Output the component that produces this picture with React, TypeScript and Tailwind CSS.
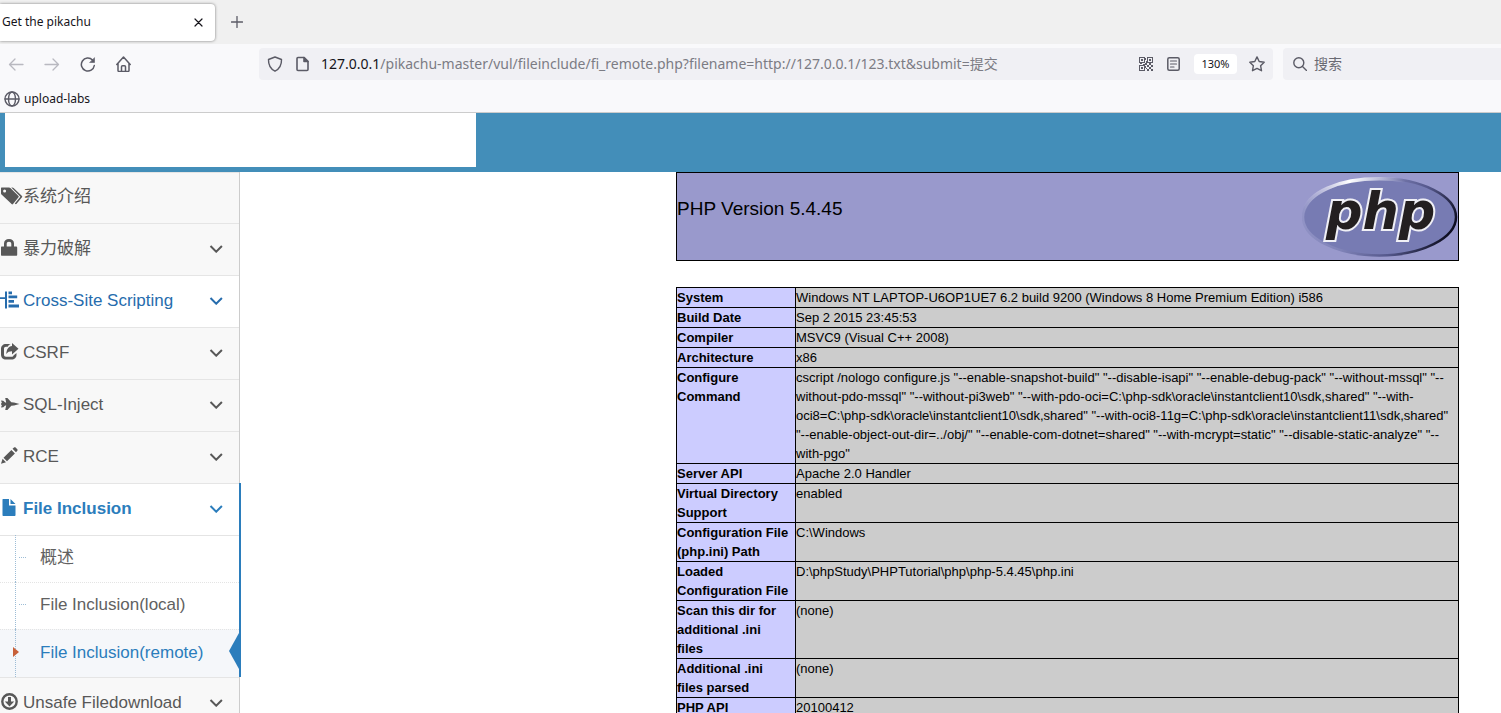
import React from "react";

const rows: [string, string][] = [
  ["System", "Windows NT LAPTOP-U6OP1UE7 6.2 build 9200 (Windows 8 Home Premium Edition) i586"],
  ["Build Date", "Sep 2 2015 23:45:53"],
  ["Compiler", "MSVC9 (Visual C++ 2008)"],
  ["Architecture", "x86"],
  [
    "Configure\nCommand",
    'cscript /nologo configure.js "--enable-snapshot-build" "--disable-isapi" "--enable-debug-pack" "--without-mssql" "--without-pdo-mssql" "--without-pi3web" "--with-pdo-oci=C:\\php-sdk\\oracle\\instantclient10\\sdk,shared" "--with-oci8=C:\\php-sdk\\oracle\\instantclient10\\sdk,shared" "--with-oci8-11g=C:\\php-sdk\\oracle\\instantclient11\\sdk,shared" "--enable-object-out-dir=../obj/" "--enable-com-dotnet=shared" "--with-mcrypt=static" "--disable-static-analyze" "--with-pgo"',
  ],
  ["Server API", "Apache 2.0 Handler"],
  ["Virtual Directory\nSupport", "enabled"],
  ["Configuration File\n(php.ini) Path", "C:\\Windows"],
  ["Loaded\nConfiguration File", "D:\\phpStudy\\PHPTutorial\\php\\php-5.4.45\\php.ini"],
  ["Scan this dir for\nadditional .ini\nfiles", "(none)"],
  ["Additional .ini\nfiles parsed", "(none)"],
  ["PHP API", "20100412"],
];

const stroke = {
  fill: "none",
  stroke: "currentColor",
  strokeLinecap: "round" as const,
  strokeLinejoin: "round" as const,
};

function Chevron() {
  return (
    <svg width="14" height="8" viewBox="0 0 14 8" className="ml-auto shrink-0">
      <path d="M1.500 1l5.700 5.700L12.900 1" fill="none" stroke="currentColor" strokeWidth="2" />
    </svg>
  );
}

function GlyphBox({ children }: { children: React.ReactNode }) {
  return (
    <svg width="23" height="20" viewBox="0 0 23 20" fill="currentColor" className="mb-0.5 shrink-0">
      {children}
    </svg>
  );
}

const glyphs = {
  tags: (
    <>
      <path fillRule="evenodd" d="M1.500 1.500h7.500c.6 0 1 .2 1.400.6L18.500 10c.4.4.4.9 0 1.300L13 18c-.4.500-1 .500-1.400 0L1.800 8.800C1.300 8.400 1 8 1 7.400V2c0-.3.200-.5.5-.5zM4.600 3.400a1.500 1.500 0 100 3 1.500 1.500 0 000-3z" />
      <path d="M11.300 1.500h.9c.6 0 1 .2 1.400.6L22 10c.4.4.4.900 0 1.300l-5.400 6.500c-.4.400-.8.400-1.200.2l-.6-.5 5.600-6.800z" />
    </>
  ),
  lock: <path fillRule="evenodd" d="M1.500 8.500H4V5.500C4 2.500 6 1 9 1s5 1.500 5 4.500v3h2.300c.5 0 .9.400.9.900v7.400c0 .6-.400 1-.9 1H2c-.600 0-1-.4-1-1V9.500c0-.6.2-1 .5-1zm5.200 0h4.600V6c0-1.500-.8-2.200-2.300-2.200S6.700 4.500 6.700 6z" />,
  align: <path d="M0 7.200h5V1.500h2v17H5V9H0zM8.500 1.500H12v2.800H8.500zM8.500 5.500h8.700v2.800H8.500zM8.500 10H14v2.800H8.500zM8.500 14.500H19v3H8.500z" />,
  share: (
    <>
      <path d="M10.500 2H6C3 2 1 4 1 7v5.500C1 15.500 3 17.500 6 17.500h5.500c3 0 5-2 5-4.500v-2l-3 2.500c-.2.900-.9 1.300-2 1.300H6c-1.300 0-2-.700-2-2V6.700c0-1.300.7-2 2-2h1.700C8.400 3.500 9.300 2.600 10.500 2z" />
      <path d="M12 1l6.500 5.700L12 12.400V9.300c-2.600 0-4.300.6-5.700 2.700C6.500 7.500 8.500 4.300 12 4z" />
    </>
  ),
  plane: <path d="M1 6.500l2.300.3 1.900 1.600h1L5.200 4h2.200l3.900 4.200 2.700.300 5.500 1.500-5.500 1.500-2.700.3L7.400 16H5.200l1-4.400h-1l-1.900 1.600-2.300.3.900-2.500-.9-.4v-1.200l.9-.4z" />,
  pencil: <path d="M1 17.800l1.600-5 3.400 3.400zM3.500 11.800l7.900-7.900 3.500 3.500L7 15.300zM12.500 2.800l1.500-1.300c.6-.5 1.100-.5 1.600 0L17.300 3.200c.5.5.5 1.100 0 1.600L16 6.300z" />,
  file: <path d="M3 1h6v6.500h6.500V17c0 .6-.4 1-1 1H3.500c-.6 0-1-.4-1-1V1.500c0-.3.200-.5.5-.5zM10.500 1l5 5h-5z" />,
  download: (
    <>
      <circle cx="9.500" cy="9.500" r="7.200" fill="none" stroke="currentColor" strokeWidth="2.400" />
      <path d="M8 5h3v4.500h3.200l-4.700 5-4.700-5H8z" />
    </>
  ),
};

type Item = { label: string; icon: keyof typeof glyphs; tone?: string; size?: string; chevron?: boolean };

const itemsTop: Item[] = [
  { label: "系统介绍", icon: "tags", size: "h-[51px]", chevron: false },
  { label: "暴力破解", icon: "lock" },
  { label: "Cross-Site Scripting", icon: "align", tone: "bg-white text-[#266cad]" },
  { label: "CSRF", icon: "share" },
  { label: "SQL-Inject", icon: "plane" },
  { label: "RCE", icon: "pencil" },
];

function NavItem({
  label,
  icon,
  tone = "bg-[#f8f8f8] text-[#585858]",
  size = "h-13",
  chevron = true,
}: Item) {
  return (
    <li>
      <a
        href="#"
        className={`flex items-center border-t border-[#e5e5e5] pr-4 pb-0.5 text-[17px] ${size} ${tone}`}
      >
        <GlyphBox>{glyphs[icon]}</GlyphBox>
        <span className="whitespace-nowrap">{label}</span>
        {chevron && <Chevron />}
      </a>
    </li>
  );
}

function SubItem({ label, active = false }: { label: string; active?: boolean }) {
  return (
    <li className="group relative">
      <a
        href="#"
        className={
          active
            ? "flex h-12 items-center border-t border-dotted border-[#e4e4e4] bg-[#f5f7fa] pb-0.5 pl-10 text-[17px] text-[#2b7dbc]"
            : "flex h-[47px] items-center border-t border-dotted border-[#e4e4e4] pb-0.5 pl-10 text-[17px] text-[#616161] group-first:border-solid"
        }
      >
        {label}
      </a>
      <span className="absolute top-0 bottom-0 left-[15px] border-l border-dotted border-[#9dbdd6]" />
      {active ? (
        <>
          <svg width="6" height="10" viewBox="0 0 6 10" className="absolute top-[18px] left-[13px]">
            <path d="M0 0l6 5-6 5z" fill="#c86139" />
          </svg>
          <svg width="10" height="36" viewBox="0 0 10 36" className="absolute top-1 right-0">
            <path d="M10 0v36L0 18z" fill="#2b7dbc" />
          </svg>
        </>
      ) : (
        <span className="absolute top-[22px] left-[19px] w-[7px] border-t border-dotted border-[#9dbdd6]" />
      )}
    </li>
  );
}

function PhpLogo() {
  return (
    <svg width="156" height="82" viewBox="0 0 156 82" role="img" aria-label="PHP logo" className="shrink-0">
      <defs>
        <linearGradient id="rim" x1="0" y1="0.3" x2="1" y2="0.6">
          <stop offset="0" stopColor="#9496c8" />
          <stop offset="0.4" stopColor="#8083b8" />
          <stop offset="0.7" stopColor="#55588c" />
          <stop offset="1" stopColor="#0c0c1e" />
        </linearGradient>
        <linearGradient id="shine" x1="0" y1="0" x2="1" y2="0">
          <stop offset="0" stopColor="#fff" stopOpacity="0" />
          <stop offset="0.45" stopColor="#fff" />
          <stop offset="1" stopColor="#fff" stopOpacity="0" />
        </linearGradient>
      </defs>
      <ellipse cx="77.500" cy="41" rx="76.500" ry="38.500" fill="#777bb3" stroke="url(#rim)" strokeWidth="2.500" />
      <path
        d="M1.500 37C5 16 37 2.800 77.500 2.800c10 0 18 .8 26 2.300"
        fill="none"
        stroke="url(#shine)"
        strokeWidth="3.500"
      />
      <text
        x="24"
        y="53"
        fontFamily="DejaVu Sans"
        fontWeight="bold"
        fontStyle="italic"
        fontSize="51"
        fill="#231f20"
        stroke="#f0f0f6"
        strokeWidth="4"
        paintOrder="stroke"
      >
        php
      </text>
    </svg>
  );
}

function QrIcon() {
  return (
    <svg width="14" height="14" viewBox="0 0 14 14" fill="currentColor" shapeRendering="crispEdges">
      <path
        fillRule="evenodd"
        d="M0 0h6v6H0zM1 1v4h4V1zM8 0h6v6H8zM9 1v4h4V1zM0 8h6v6H0zM1 9v4h4V9z"
      />
      <path d="M2 2h2v2H2zM10 2h2v2h-2zM2 10h2v2H2zM6 1h1v2H6zM7 4h1v2H7zM6 6h2v2H6zM1 6h2v1H1zM4 7h2v1H4zM8 8h2v2H8zM10 6h2v2h-2zM12 8h2v2h-2zM10 10h2v2h-2zM8 12h2v2H8zM12 12h2v2h-2zM6 9h1v2H6zM7 11h1v1H7z" />
    </svg>
  );
}

export default function App() {
  return (
    <div className="flex h-screen flex-col overflow-hidden bg-white font-['Liberation_Sans','Noto_Sans_CJK_SC',sans-serif]">
      <header className="shrink-0 border-b border-[#ccc] bg-[#f9f9fb] font-['Noto_Sans','Noto_Sans_CJK_SC',sans-serif] text-[#15141a]">
        <div className="flex h-11 items-center bg-[#f0f0f0]">
          <div className="flex h-[37px] w-[215px] items-center justify-between rounded-r bg-white pr-3 pl-0.5 text-xs shadow-[0_0_3px_rgba(0,0,0,0.5)]">
            <span>Get the pikachu</span>
            <button aria-label="Close tab">
              <svg width="9" height="9" viewBox="0 0 9 9" {...stroke} strokeWidth="1.200">
                <path d="M1 1l7 7M8 1L1 8" />
              </svg>
            </button>
          </div>
          <button aria-label="New tab" className="ml-4 text-[#5b5b66]">
            <svg width="12" height="12" viewBox="0 0 12 12" {...stroke} strokeWidth="1.300">
              <path d="M6 .5v11M.5 6h11" />
            </svg>
          </button>
        </div>

        <div className="flex h-10 items-center pl-2 text-[#5b5b66]">
          <div className="flex w-[251px] shrink-0 items-center gap-5">
            <button aria-label="Back" className="text-[#b9b9c0]">
              <svg width="16" height="16" viewBox="0 0 16 16" {...stroke} strokeWidth="1.300">
                <path d="M15 8.500H1.500M7 3L1.500 8.500 7 14" />
              </svg>
            </button>
            <button aria-label="Forward" className="text-[#b9b9c0]">
              <svg width="16" height="16" viewBox="0 0 16 16" {...stroke} strokeWidth="1.300">
                <path d="M1 8.500h13.500M9 3l5.500 5.500L9 14" />
              </svg>
            </button>
            <button aria-label="Reload">
              <svg width="16" height="16" viewBox="0 0 16 16" {...stroke} strokeWidth="1.500">
                <path d="M14.300 9.500A6.500 6.500 0 1 1 12.500 4" />
                <path d="M14.500 2v4.500H10z" fill="currentColor" strokeWidth=".6" />
              </svg>
            </button>
            <button aria-label="Home">
              <svg width="16" height="16" viewBox="0 0 16 16" {...stroke} strokeWidth="1.500">
                <path d="M.8 8.500L7.500 1l6.700 7.500M2 7.500v6.900c0 .6.400 1 1 1h9c.6 0 1-.4 1-1V7.500M5.500 15.300v-4.500c0-.600.400-1 1-1h2c.600 0 1 .4 1 1v4.500" />
              </svg>
            </button>
          </div>

          <div className="flex h-8 min-w-0 flex-1 items-center rounded bg-[#f0f0f4] px-2">
            <svg width="16" height="16" viewBox="0 0 16 16" {...stroke} strokeWidth="1.400" className="shrink-0">
              <path d="M8 1l6.500 2.500c.2 5-1.300 9-6.500 11.700C2.800 12.500 1.300 8.500 1.500 3.500z" />
            </svg>
            <svg width="14" height="16" viewBox="0 0 14 16" {...stroke} strokeWidth="1.600" className="ml-3 shrink-0">
              <path d="M3 1.500h6L13 5.500v8c0 .6-.4 1-1 1H3c-.6 0-1-.4-1-1v-11c0-.6.4-1 1-1z" />
              <path d="M9 1.500v4h4z" fill="currentColor" />
            </svg>
            <label htmlFor="url" className="ml-3 text-sm text-[#15141a]">
              127.0.0.1
            </label>
            <input
              id="url"
              className="min-w-0 flex-1 bg-transparent text-sm text-[#7c7c84] outline-none"
              defaultValue="/pikachu-master/vul/fileinclude/fi_remote.php?filename=http://127.0.0.1/123.txt&submit=提交"
            />
            <div className="flex shrink-0 items-center gap-3">
              <button aria-label="QR code" className="mr-0.5">
                <QrIcon />
              </button>
              <button aria-label="Reader view" className="mr-0.5">
                <svg width="13" height="14" viewBox="0 0 13 14" {...stroke} strokeWidth="1.500">
                  <rect x=".8" y=".8" width="11.400" height="12.400" rx="1.500" />
                  <path d="M3.500 4h6M3.500 7h6M3.500 10h3.500" strokeWidth="1.200" />
                </svg>
              </button>
              <button className="h-5 w-[43px] rounded bg-white text-[11px] text-[#15141a]">130%</button>
              <button aria-label="Bookmark this page">
                <svg width="16" height="16" viewBox="0 0 16 16" {...stroke} strokeWidth="1.400">
                  <path d="M8 .9l2.200 4.600 5 .7-3.600 3.500.9 5L8 12.400l-4.500 2.300.9-5L.8 6.200l5-.7z" />
                </svg>
              </button>
            </div>
          </div>

          <div className="ml-2.5 flex h-8 w-[218px] shrink-0 items-center rounded-l bg-[#f0f0f4] pl-2.5">
            <svg width="14" height="14" viewBox="0 0 14 14" {...stroke} strokeWidth="1.400" className="shrink-0">
              <circle cx="5.800" cy="5.800" r="5" />
              <path d="M9.500 9.500l4 4" />
            </svg>
            <input
              aria-label="搜索"
              placeholder="搜索"
              className="ml-[7px] min-w-0 flex-1 bg-transparent text-sm outline-none placeholder:text-[#6a6a73]"
            />
          </div>
        </div>

        <div className="flex h-7 items-center pt-0.5 pl-1 text-xs">
          <a href="#" className="flex items-center gap-1">
            <svg width="16" height="16" viewBox="0 0 16 16" {...stroke} strokeWidth="1.400" className="text-[#5b5b66]">
              <circle cx="8" cy="8" r="7" />
              <ellipse cx="8" cy="8" rx="3.500" ry="7" />
              <path d="M1 8h14" />
            </svg>
            upload-labs
          </a>
        </div>
      </header>

      <div className="h-[59px] shrink-0 bg-[#438eb9] pl-[5px]">
        <div className="h-[54px] w-[471px] bg-white" />
      </div>

      <div className="flex min-h-0 flex-1">
        <aside className="w-60 shrink-0 border-r border-[#ccc] bg-[#f2f2f2]">
          <ul>
            {itemsTop.map((item) => (
              <NavItem key={item.label} {...item} />
            ))}
            <li className="relative">
              <a
                href="#"
                className="flex h-13 items-center border-t border-[#e5e5e5] bg-white pr-4 pb-0.5 text-[17px] font-bold text-[#2b7dbc]"
              >
                <GlyphBox>{glyphs.file}</GlyphBox>
                File Inclusion
                <Chevron />
              </a>
              <ul className="bg-white">
                <SubItem label="概述" />
                <SubItem label="File Inclusion(local)" />
                <SubItem label="File Inclusion(remote)" active />
              </ul>
              <span className="absolute top-0 -right-0.5 bottom-0 w-0.5 bg-[#2b7dbc]" />
            </li>
            <NavItem label="Unsafe Filedownload" icon="download" />
          </ul>
        </aside>

        <main className="min-w-0 flex-1 pr-[42px] pl-[436px] text-black">
          <div className="flex h-[89px] justify-between border border-black bg-[#9999cc]">
            <h1 className="pt-6 text-[19px] leading-6">PHP Version 5.4.45</h1>
            <div className="pt-[3px]">
              <PhpLogo />
            </div>
          </div>
          <table className="mt-[26px] w-full table-fixed border-collapse text-[13px] leading-[19px]">
            <colgroup>
              <col className="w-[119px]" />
              <col />
            </colgroup>
            <tbody>
              {rows.map(([name, value]) => (
                <tr key={name} className="align-top">
                  <th
                    scope="row"
                    className="border border-black bg-[#ccccff] text-left font-bold whitespace-pre-line"
                  >
                    {name}
                  </th>
                  <td className="border border-black bg-[#cccccc]">{value}</td>
                </tr>
              ))}
            </tbody>
          </table>
        </main>
      </div>
    </div>
  );
}
